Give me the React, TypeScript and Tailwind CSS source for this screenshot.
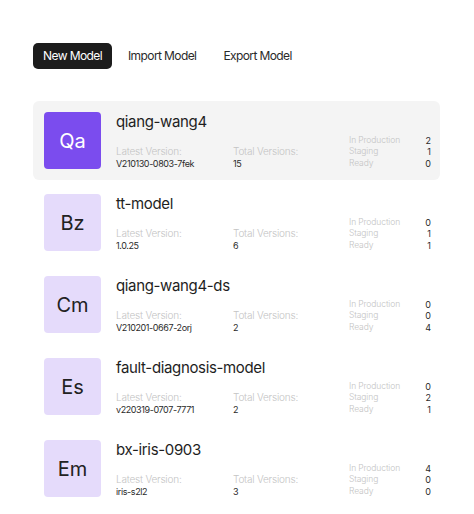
import React from 'react';

type Model = {
  initials: string;
  name: string;
  latest: string;
  total: number;
  production: number;
  staging: number;
  ready: number;
  active?: boolean;
};

const models: Model[] = [
  { initials: 'Qa', name: 'qiang-wang4', latest: 'V210130-0803-7fek', total: 15, production: 2, staging: 1, ready: 0, active: true },
  { initials: 'Bz', name: 'tt-model', latest: '1.0.25', total: 6, production: 0, staging: 1, ready: 1 },
  { initials: 'Cm', name: 'qiang-wang4-ds', latest: 'V210201-0667-2orj', total: 2, production: 0, staging: 0, ready: 4 },
  { initials: 'Es', name: 'fault-diagnosis-model', latest: 'v220319-0707-7771', total: 2, production: 0, staging: 2, ready: 1 },
  { initials: 'Em', name: 'bx-iris-0903', latest: 'iris-s2l2', total: 3, production: 4, staging: 0, ready: 0 },
];

function StatLine({ label, value }: { label: string; value: number }) {
  return (
    <div className="flex justify-between">
      <span className="text-[8.5px] font-light tracking-[-0.1px] text-[#c4c4c4]">{label}</span>
      <span className="text-[9px] text-[#2a2a2a]">{value}</span>
    </div>
  );
}

function ModelRow({ model }: { model: Model }) {
  return (
    <div className={`flex h-[79px] items-center rounded-md pl-[11px] pr-[9px] ${model.active ? 'bg-[#f4f4f4]' : ''}`}>
      <div
        className={`flex h-[57px] w-[57px] shrink-0 items-center justify-center rounded-[4px] text-[20px] ${
          model.active ? 'bg-[#7b4cee] text-white' : 'bg-[#e5dbfb] text-[#222]'
        }`}
      >
        {model.initials}
      </div>
      <div className="ml-[15px] flex h-[57px] flex-1 flex-col justify-between">
        <div className="pt-[1px] text-[15px] leading-[18px] tracking-[-0.35px] text-[#1e1e1e]">{model.name}</div>
        <div className="flex items-end leading-[11.5px]">
          <div className="w-[117px]">
            <div className="text-[10px] font-light tracking-[-0.2px] text-[#c4c4c4]">Latest Version:</div>
            <div className="text-[9px] tracking-[-0.4px] text-[#2a2a2a]">{model.latest}</div>
          </div>
          <div className="w-[116px]">
            <div className="text-[10px] font-light tracking-[-0.2px] text-[#c4c4c4]">Total Versions:</div>
            <div className="text-[9px] tracking-[-0.4px] text-[#2a2a2a]">{model.total}</div>
          </div>
          <div className="flex flex-1 flex-col">
            <StatLine label="In Production" value={model.production} />
            <StatLine label="Staging" value={model.staging} />
            <StatLine label="Ready" value={model.ready} />
          </div>
        </div>
      </div>
    </div>
  );
}

export default function App() {
  return (
    <div className="min-h-[514px] bg-white pl-[33px] pr-[34px] pt-[43px]" style={{ fontFamily: 'Inter, "Noto Sans", sans-serif' }}>
      <div className="flex items-center text-[12px] tracking-[-0.6px]">
        <button className="h-[26px] w-[79px] rounded-[5px] bg-[#1c1c1c] text-white">New Model</button>
        <button className="ml-[16px] text-[#2a2a2a]">Import Model</button>
        <button className="ml-[27px] text-[#2a2a2a]">Export Model</button>
      </div>
      <div className="mt-[32px] flex flex-col gap-[3px]">
        {models.map((m) => (
          <ModelRow key={m.name} model={m} />
        ))}
      </div>
    </div>
  );
}
